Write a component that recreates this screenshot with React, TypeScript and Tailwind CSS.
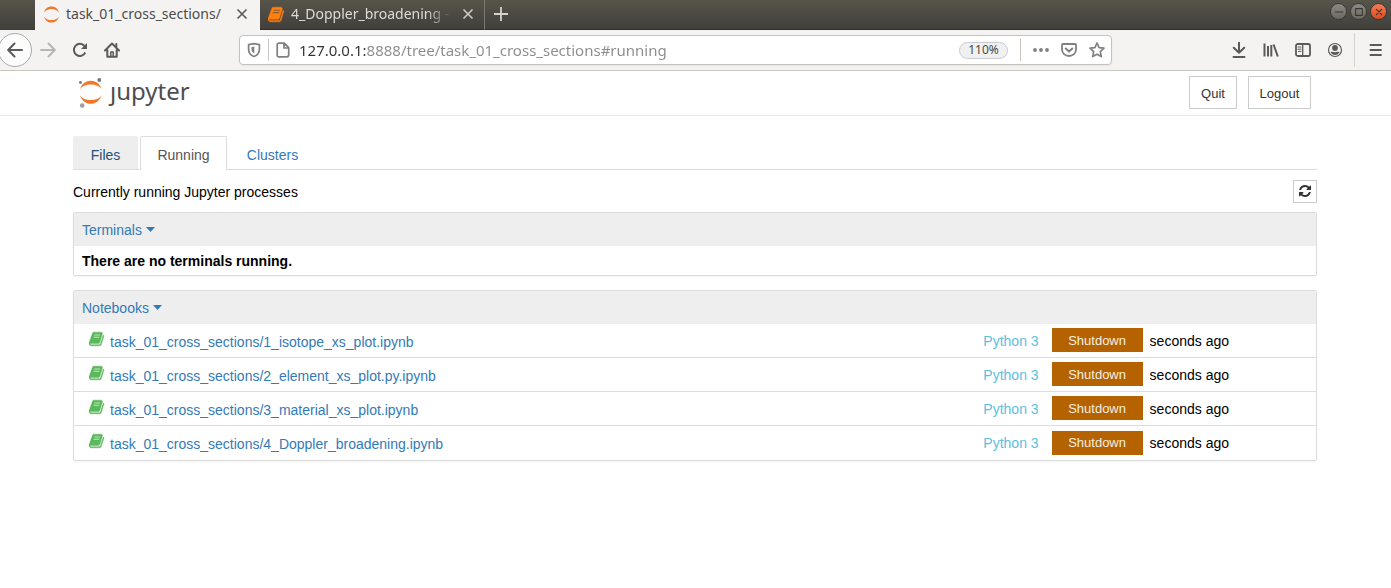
import React from "react";

const notebooks = [
  "task_01_cross_sections/1_isotope_xs_plot.ipynb",
  "task_01_cross_sections/2_element_xs_plot.py.ipynb",
  "task_01_cross_sections/3_material_xs_plot.ipynb",
  "task_01_cross_sections/4_Doppler_broadening.ipynb",
];

function Book({ className }: { className: string }) {
  return (
    <svg viewBox="0 0 1792 1792" className={className} fill="currentColor" stroke="currentColor" strokeWidth="50" aria-hidden="true">
      <path d="M1639 478q40 57 18 129l-275 906q-19 64-76.500 107.500t-122.500 43.500h-923q-77 0-148.500-53.500t-99.500-131.500q-24-67-2-127 0-4 3-27t4-37q1-8-3-21.500t-3-19.500q2-11 8-21t16.500-23.500 16.500-23.500q23-38 45-91.500t30-91.500q3-10 .5-30t-.5-28q3-11 17-28t17-23q21-36 42-92t25-90q1-9-2.500-32t.5-28q4-13 22-30.500t22-22.500q19-26 42.500-84.500t27.500-96.500q1-8-3-25.500t-2-26.500q2-8 9-18t18-23 17-21q8-12 16.500-30.500t15-35 16-36 19.500-32 26.500-23.500 36-11.500 47.500 5.500l-1 3q38-9 51-9h761q74 0 114 56t18 130l-274 906q-36 119-71.500 153.500t-128.500 34.500h-869q-27 0-38 15-11 16-1 43 24 70 144 70h923q29 0 56-15.500t35-41.500l300-987q7-22 5-57 38 15 59 43zm-1064 2q-4 13 2 22.500t20 9.500h608q13 0 25.500-9.500t16.500-22.500l21-64q4-13-2-22.500t-20-9.500h-608q-13 0-25.500 9.500t-16.500 22.500zm-83 256q-4 13 2 22.500t20 9.500h608q13 0 25.500-9.500t16.500-22.500l21-64q4-13-2-22.500t-20-9.500h-608q-13 0-25.500 9.500t-16.500 22.500z" />
    </svg>
  );
}

function Icon({ children, className = "size-4" }: { children: React.ReactNode; className?: string }) {
  return (
    <svg
      viewBox="0 0 16 16"
      className={className}
      fill="none"
      stroke="currentColor"
      strokeWidth="2"
      strokeLinecap="round"
      strokeLinejoin="round"
      aria-hidden="true"
    >
      {children}
    </svg>
  );
}

function ToolButton({ label, children, className = "" }: { label: string; children: React.ReactNode; className?: string }) {
  return (
    <button type="button" aria-label={label} className={`flex h-8 w-8 shrink-0 items-center justify-center ${className}`}>
      {children}
    </button>
  );
}

function CloseIcon() {
  return (
    <Icon className="size-4">
      <path d="M3.500 3.500l9 9M12.500 3.500l-9 9" strokeWidth="1.700" strokeLinecap="butt" />
    </Icon>
  );
}

function TitleBar() {
  return (
    <div className="flex h-[30px] items-stretch bg-linear-to-b from-[#57544a] to-[#403f3a] pl-[35px] font-['Noto_Sans',sans-serif] text-sm">
      <div className="flex w-[225px] shrink-0 items-center bg-[#f4f3f2] pb-0.5 pl-2 text-[#4c4c4c]">
        <svg viewBox="0 0 16 16" className="mr-1.5 size-[17px] shrink-0" fill="#f37726" aria-hidden="true">
          <path d="M1 6C2 2.500 4.700 .5 8 .5S14 2.500 15 6C13.500 4 11 2.800 8 2.800S2.500 4 1 6z" />
          <path d="M1 10C2 13.500 4.700 15.500 8 15.500s6-2 7-5.500c-1.500 2-4 3.200-7 3.200S2.500 12 1 10z" />
        </svg>
        <span className="flex-1 overflow-hidden whitespace-nowrap">task_01_cross_sections/</span>
        <button type="button" aria-label="Close tab" className="mr-2.5 text-[#5c5c5c]"><CloseIcon /></button>
      </div>
      <div className="flex w-[225px] shrink-0 items-center border-r border-b border-r-[#7b7972] border-b-[#302e29] pb-px pl-2 text-[#dedcd4]">
        <Book className="mr-1.5 size-[17px] shrink-0 text-[#ff7f0e]" />
        <span className="flex-1 overflow-hidden whitespace-nowrap mask-[linear-gradient(to_right,black_135px,transparent_160px)]">4_Doppler_broadening -</span>
        <button type="button" aria-label="Close tab" className="mr-2 text-[#c9c7c0]"><CloseIcon /></button>
      </div>
      <div className="flex flex-1 items-center border-b border-[#302e29] pb-0.5 pl-2 text-[#d5d3cc]">
        <button type="button" aria-label="New tab">
          <Icon><path d="M8 1v14M1 8h14" strokeWidth="1.800" strokeLinecap="butt" /></Icon>
        </button>
        <div className="mr-1 mb-1 ml-auto flex gap-[3px] text-[#383733]">
          <button type="button" aria-label="Minimize" className="flex size-[17px] items-center justify-center rounded-full border border-[#3b3a36] bg-linear-to-b from-[#8b8981] to-[#6b6961]">
            <Icon className="size-3"><path d="M3 8h10" strokeWidth="1.400" /></Icon>
          </button>
          <button type="button" aria-label="Maximize" className="flex size-[17px] items-center justify-center rounded-full border border-[#3b3a36] bg-linear-to-b from-[#8b8981] to-[#6b6961]">
            <Icon className="size-3"><path d="M3.500 3.500h9v9h-9z" strokeWidth="1.400" /></Icon>
          </button>
          <button type="button" aria-label="Close window" className="flex size-[17px] items-center justify-center rounded-full border border-[#3b3a36] bg-linear-to-b from-[#f47b55] to-[#df4a16]">
            <Icon className="size-3"><path d="M4.500 4.500l7 7M11.500 4.500l-7 7" strokeWidth="1.600" /></Icon>
          </button>
        </div>
      </div>
    </div>
  );
}

function NavBar() {
  return (
    <div className="flex h-[41px] items-center border-b border-[#cbc5c0] bg-[#f4f3f2] font-['Noto_Sans',sans-serif] text-[#5a5a5a]">
      <button type="button" aria-label="Back" className="-ml-0.5 flex size-[34px] shrink-0 items-center justify-center rounded-full border border-[#aaa] bg-[#fcfcfc]">
        <Icon><path d="M15 8H1.500M7.500 1.500L1.200 8l6.300 6.500" /></Icon>
      </button>
      <ToolButton label="Forward" className="text-[#b5b5b4]">
        <Icon><path d="M1 8h13.500M8.500 1.500L14.800 8l-6.300 6.500" /></Icon>
      </ToolButton>
      <ToolButton label="Reload">
        <Icon>
          <path d="M13.300 10.500A6 6 0 1 1 12.500 4" strokeLinecap="butt" />
          <path d="M15 1v6H9z" fill="currentColor" stroke="none" />
        </Icon>
      </ToolButton>
      <ToolButton label="Home">
        <Icon><path d="M1 8.500L8 1.500l7 7M3.300 8v6.700h9.400V8" /><path d="M12.300 2v3" /><path d="M6.800 14V10h2.400v4" strokeWidth="1.500" /></Icon>
      </ToolButton>
      <div className="mr-[111px] ml-[111px] flex h-[30px] flex-1 items-center rounded-sm border border-[#c5c1bd] bg-white text-[#808080] shadow-xs">
        <button type="button" aria-label="Tracking protection" className="ml-1.5 flex">
          <Icon>
            <path d="M8 1.600L2.600 2.700v4.600c0 3.600 2.200 6.100 5.400 7.200 3.200-1.100 5.400-3.600 5.400-7.200V2.700z" strokeWidth="1.700" />
            <path d="M8.300 4.500L5.500 5v2.500c0 1.800 1 3.200 2.800 4z" fill="currentColor" stroke="none" />
          </Icon>
        </button>
        <span className="mx-1.5 h-[22px] w-px bg-[#c8c8c8]" />
        <button type="button" aria-label="Site information" className="flex">
          <Icon><path d="M3.800 1.200h5.400l4.500 4.500v7.100a2 2 0 0 1-2 2H3.800a1.600 1.600 0 0 1-1.600-1.600V2.800a1.600 1.600 0 0 1 1.600-1.600zM9 1.500V6h4.500" strokeWidth="1.700" /></Icon>
        </button>
        <input
          aria-label="Address"
          defaultValue="127.0.0.1:8888/tree/task_01_cross_sections#running"
          className="ml-2 min-w-0 flex-1 bg-[linear-gradient(to_right,#333_67px,#8c8c8c_67px)] bg-clip-text pt-px text-[15px] text-transparent outline-none"
        />
        <button type="button" className="flex h-[17px] w-[49px] items-center justify-center rounded-full border border-[#c8ccd2] bg-[#f0f0f0] text-xs text-[#4a4a4a]">110%</button>
        <span className="mx-3 h-[22px] w-px bg-[#c8c3be]" />
        <button type="button" aria-label="Page actions" className="flex">
          <Icon className="size-4"><g fill="currentColor" stroke="none"><circle cx="2" cy="8" r="1.900" /><circle cx="8" cy="8" r="1.900" /><circle cx="14" cy="8" r="1.900" /></g></Icon>
        </button>
        <button type="button" aria-label="Save to Pocket" className="ml-3 flex">
          <Icon><path d="M2 2h12c.5 0 1 .4 1 1v4.500a7 6.500 0 0 1-14 0V3c0-.6.5-1 1-1z" strokeWidth="1.800" /><path d="M4.700 6.500L8 9.600l3.300-3.100" /></Icon>
        </button>
        <button type="button" aria-label="Bookmark" className="mr-1.5 ml-3 flex">
          <Icon><path d="M8 1l2.100 4.600 4.900.6-3.700 3.400 1 5L8 12.200l-4.300 2.400 1-5L1 6.200l4.900-.6z" strokeWidth="1.700" /></Icon>
        </button>
      </div>
      <ToolButton label="Downloads">
        <Icon><path d="M8 .8v9.400M2.800 5.800L8 10.800l5.200-5M2.500 15h11" /></Icon>
      </ToolButton>
      <ToolButton label="Library">
        <Icon><path d="M1.500 1.500v13M5 4v10.500M8.300 3v11.500M10.600 2.500l4.200 12" strokeLinecap="butt" /></Icon>
      </ToolButton>
      <ToolButton label="Sidebars">
        <Icon><rect x="1" y="2" width="14" height="12" rx="1.800" strokeWidth="1.800" /><path d="M7.700 2v12" strokeWidth="1.300" /><path d="M3 5h3M3 7.200h3M3.500 9.400H6" strokeWidth="1" /></Icon>
      </ToolButton>
      <ToolButton label="Account">
        <Icon><circle cx="8" cy="8" r="6.500" strokeWidth="1.200" /><circle cx="8" cy="6" r="2.900" fill="currentColor" stroke="none" /><path d="M3.500 10c1.500-.6 2 .2 4.500.2s3-.8 4.500-.2c-.8 2-2.500 3-4.500 3s-3.700-1-4.500-3z" fill="currentColor" stroke="none" /></Icon>
      </ToolButton>
      <span className="mr-1 ml-[3px] h-[34px] w-px bg-[#d5d1cd]" />
      <ToolButton label="Menu">
        <Icon><path d="M3.500 3h10.400M3.500 8h10.400M3.500 13h10.400" /></Icon>
      </ToolButton>
    </div>
  );
}

function Panel({ title, children }: { title: string; children: React.ReactNode }) {
  return (
    <section className="mb-3.5 overflow-hidden rounded-xs border border-[#ddd] shadow-xs">
      <h2 className="bg-[#eee]">
        <button type="button" className="flex h-[33px] items-center gap-1 px-2 text-[#337ab7]">
          {title}
          <svg viewBox="0 0 9 5" className="h-[5px] w-[9px]" fill="currentColor" aria-hidden="true"><path d="M0 0h9L4.500 5z" /></svg>
        </button>
      </h2>
      {children}
    </section>
  );
}

export default function App() {
  return (
    <div className="min-h-screen bg-white font-['Liberation_Sans',Arial,sans-serif] text-sm text-black">
      <TitleBar />
      <NavBar />
      <header className="flex h-[45px] items-start border-b border-[#e7e7e7] pr-20 pl-[78px]">
        <a href="#home" aria-label="Jupyter" className="flex pt-1.5">
          <svg viewBox="0 0 26 32" className="h-8 w-[26px]" aria-hidden="true">
            <g fill="#f37726">
              <path d="M2 12C4 6.500 8 3.800 12.800 3.800S21.600 6.500 23.600 12C21.500 9 17.500 7.500 12.800 7.500S4.100 9 2 12z" />
              <path d="M2 18.500c2 5.500 6 8.300 10.800 8.300s8.800-2.800 10.800-8.300c-2.100 3-6.100 4.500-10.800 4.500S4.100 21.500 2 18.500z" />
            </g>
            <circle cx="21.300" cy="3" r="1.900" fill="#767677" />
            <circle cx="2.400" cy="5.500" r="1.400" fill="#767677" />
            <circle cx="4.200" cy="28.500" r="2.300" fill="#9e9e9e" />
          </svg>
          <span className="pl-1.5 font-['Noto_Sans',sans-serif] text-2xl leading-7 text-[#4e4e4e]">ȷupyter</span>
        </a>
        <div className="ml-auto flex gap-[11px] pt-[5px] text-[13px] text-[#333]">
          <button type="button" className="h-[33px] w-12 border border-[#ccc] pt-1">Quit</button>
          <button type="button" className="h-[33px] w-[63px] border border-[#ccc] pt-1">Logout</button>
        </div>
      </header>
      <main className="pt-5 pr-[74px] pl-[73px]">
        <nav className="flex h-[34px] gap-0.5 border-b border-[#ddd] leading-[38px]">
          <a href="#files" className="w-[65px] rounded-t-xs bg-[#eee] text-center text-[#23527c]">Files</a>
          <a href="#running" className="-mb-px w-[87px] rounded-t-xs border border-b-0 border-[#ddd] bg-white text-center leading-9 text-[#555]">Running</a>
          <a href="#clusters" className="w-[87px] text-center text-[#337ab7]">Clusters</a>
        </nav>
        <div className="flex h-[42px] items-center justify-between">
          <p className="pt-0.5">Currently running Jupyter processes</p>
          <button type="button" aria-label="Refresh" className="flex h-[23px] w-6 items-center justify-center border border-[#ccc] text-[#333]">
            <svg viewBox="0 0 1792 1792" className="size-3.5" fill="currentColor" aria-hidden="true">
              <path d="M1639 1056q0 5-1 7-64 268-268 434.500t-478 166.500q-146 0-282.500-55t-243.500-157l-129 129q-19 19-45 19t-45-19-19-45v-448q0-26 19-45t45-19h448q26 0 45 19t19 45-19 45l-137 137q71 66 161 102t187 36q134 0 250-65t186-179q11-17 53-117 8-23 30-23h192q13 0 22.500 9.500t9.500 22.500zm25-800v448q0 26-19 45t-45 19h-448q-26 0-45-19t-19-45 19-45l138-138q-148-137-349-137-134 0-250 65t-186 179q-11 17-53 117-8 23-30 23h-199q-13 0-22.500-9.500t-9.500-22.500v-7q65-268 270-434.500t480-166.500q146 0 284 55.500t245 156.500l130-129q19-19 45-19t45 19 19 45z" />
            </svg>
          </button>
        </div>
        <Panel title="Terminals">
          <p className="h-[29px] px-2 leading-[30px] font-bold">There are no terminals running.</p>
        </Panel>
        <Panel title="Notebooks">
          <ul>
            {notebooks.map((name) => (
              <li key={name} className="flex h-[34px] items-center border-b border-[#ddd] pr-[87px] pl-[15px] last:border-b-0">
                <Book className="mr-[5px] mb-1 size-4 text-[#5cb85c]" />
                <a href="#notebook" className="pt-0.5 text-[#337ab7]">{name}</a>
                <span className="ml-auto text-[#5bc0de]">Python 3</span>
                <button type="button" className="mb-px ml-[13px] h-6 w-[91px] bg-[#b46300] pt-0.5 text-[13px] text-[#f5ede2]">Shutdown</button>
                <span className="ml-[7px] whitespace-nowrap">seconds ago</span>
              </li>
            ))}
          </ul>
        </Panel>
      </main>
    </div>
  );
}
